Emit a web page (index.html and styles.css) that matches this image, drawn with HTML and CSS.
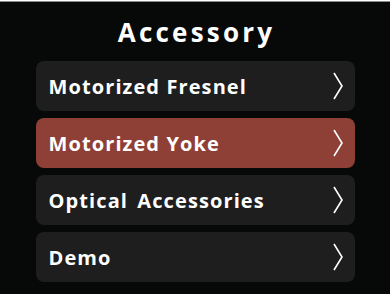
FILE: index.html
```html
<!DOCTYPE html>
<html>
<head>
<meta charset="utf-8">
<link rel="stylesheet" href="styles.css">
</head>
<body>
<div class="screen">
  <h1 class="title">Accessory</h1>
  <ul class="menu">
    <li class="item"><span class="label">Motorized Fresnel</span><svg class="chev" viewBox="0 0 12 28" width="12" height="28"><polyline points="2,1 10,14 2,27" fill="none" stroke="#fff" stroke-width="1.6"/></svg></li>
    <li class="item active"><span class="label">Motorized Yoke</span><svg class="chev" viewBox="0 0 12 28" width="12" height="28"><polyline points="2,1 10,14 2,27" fill="none" stroke="#fff" stroke-width="1.6"/></svg></li>
    <li class="item"><span class="label">Optical<span class="wide"> </span>Accessories</span><svg class="chev" viewBox="0 0 12 28" width="12" height="28"><polyline points="2,1 10,14 2,27" fill="none" stroke="#fff" stroke-width="1.6"/></svg></li>
    <li class="item"><span class="label">Demo</span><svg class="chev" viewBox="0 0 12 28" width="12" height="28"><polyline points="2,1 10,14 2,27" fill="none" stroke="#fff" stroke-width="1.6"/></svg></li>
  </ul>
</div>
</body>
</html>
```
FILE: styles.css
```css
html, body {
  margin: 0;
  padding: 0;
  background: #ffffff;
}
.screen {
  box-sizing: border-box;
  width: 390px;
  height: 293px;
  margin-top: 1px;
  background: #070908;
  border-top: 1px solid #8a8a8a;
  font-family: "Open Sans", "DejaVu Sans", sans-serif;
  color: #fff;
  display: flex;
  flex-direction: column;
  align-items: center;
}
.title {
  margin: 12px 0 0 3px;
  height: 47px;
  font-size: 26px;
  font-weight: 700;
  letter-spacing: 3.2px;
  line-height: 36px;
}
.menu {
  list-style: none;
  margin: 0;
  padding: 0;
  display: flex;
  flex-direction: column;
  gap: 7px;
}
.item {
  box-sizing: border-box;
  width: 319px;
  height: 50px;
  border-radius: 8px;
  background: #1e1e1e;
  display: flex;
  align-items: center;
  justify-content: space-between;
  padding: 0 11px 0 13px;
}
.item.active {
  background: #8e3f36;
}
.label {
  font-size: 20px;
  font-weight: 700;
  letter-spacing: 1.1px;
  white-space: pre;
}
.wide {
  word-spacing: 3px;
}
.chev {
  display: block;
}
```
